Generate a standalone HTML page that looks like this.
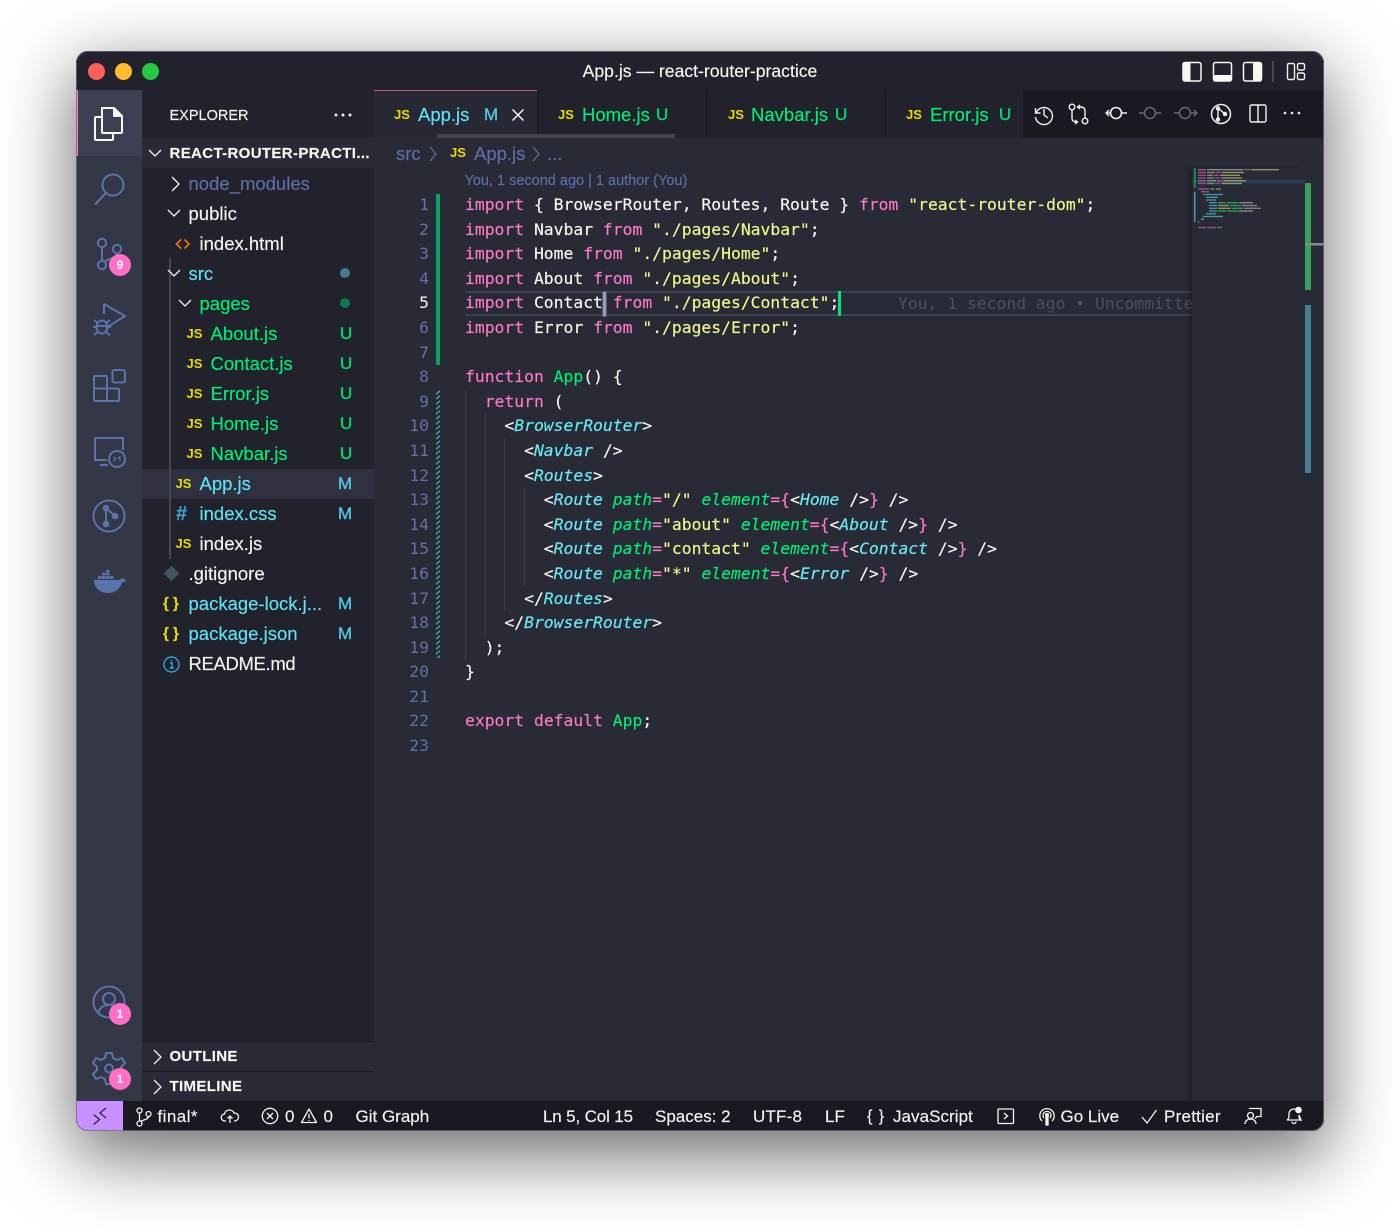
<!DOCTYPE html>
<html><head><meta charset="utf-8">
<style>
html,body{margin:0;padding:0;background:#fff;width:1400px;height:1232px;overflow:hidden}
#win{position:absolute;left:76px;top:51px;width:1248px;height:1080px;border-radius:12px;background:#282a36;overflow:hidden;box-shadow:0 22px 70px 4px rgba(0,0,0,.56)}
#ring{position:absolute;left:0;top:0;width:1248px;height:1080px;box-sizing:border-box;border-radius:12px;border:1px solid rgba(110,110,115,.75)}
.a{position:absolute}
.t{position:absolute;white-space:pre;font-family:"Liberation Sans",sans-serif;font-size:18.5px;line-height:30px;height:30px;color:#f8f8f2;margin-top:1px;-webkit-text-stroke:.15px currentColor}
.js{position:absolute;font:bold 13px/30px "Liberation Sans",sans-serif;color:#e8dc00;height:30px;white-space:pre;margin-top:1px}
.g{color:#00ee77}.c{color:#5fe4f5}.w{color:#f4f4f0}.b{color:#5e6fa8}
.gb{color:#00d96c;-webkit-text-stroke:.4px currentColor}.mb{color:#4fc3de;-webkit-text-stroke:.4px currentColor}
.code{position:absolute;left:389px;top:142px;font:16.37px/24.6px "DejaVu Sans Mono",monospace;color:#f8f8f2;white-space:pre;-webkit-text-stroke:.15px currentColor}
.code i{font-style:italic}
.k{color:#ff79c6}.s{color:#f1fa8c}.gn{color:#00ee77}.cy{color:#6ae9f5}
.ln{position:absolute;left:316px;width:37px;top:142px;text-align:right;font:16.37px/24.6px "DejaVu Sans Mono",monospace;color:#6272a4;white-space:pre}
svg{position:absolute;overflow:visible}
.i{fill:none;stroke:#5b73ad;stroke-width:2}
.s1{fill:none;stroke:#f4f4f0;stroke-width:1.3}
.st{position:absolute;top:1051px;white-space:pre;font:17px/30px "Liberation Sans",sans-serif;color:#f4f4f0;-webkit-text-stroke:.15px currentColor}
.badge{position:absolute;width:22px;height:22px;border-radius:11px;background:#ff6ec7;color:#fff;font:bold 12px/22px "Liberation Sans",sans-serif;text-align:center}
</style></head>
<body>
<div id="win">
<!-- title bar -->
<div class="a" style="left:0;top:0;width:1248px;height:39px;background:#21222c"></div>
<div class="a" style="left:12px;top:12px;width:17px;height:17px;border-radius:50%;background:#ff5f57"></div>
<div class="a" style="left:39px;top:12px;width:17px;height:17px;border-radius:50%;background:#febc2e"></div>
<div class="a" style="left:66px;top:12px;width:17px;height:17px;border-radius:50%;background:#28c840"></div>
<div class="t" style="left:0;width:1248px;text-align:center;top:4px;font-size:17.6px">App.js — react-router-practice</div>
<svg style="left:1106px;top:10px" width="150" height="20">
<rect x="1" y="1.500" width="18" height="18.500" rx="2" fill="none" stroke="#f8f8f2" stroke-width="1.500"/><rect x="1" y="1.500" width="7.500" height="18.500" fill="#f8f8f2"/>
<rect x="31.500" y="1.500" width="18" height="18.500" rx="2" fill="none" stroke="#f8f8f2" stroke-width="1.500"/><rect x="31.500" y="14" width="18" height="6" fill="#f8f8f2"/>
<rect x="61.500" y="1.500" width="18" height="18.500" rx="2" fill="none" stroke="#f8f8f2" stroke-width="1.500"/><rect x="71" y="1.500" width="8.500" height="18.500" fill="#f8f8f2"/>
<line x1="91" y1="0" x2="91" y2="21" stroke="#555" stroke-width="1.500"/>
<rect x="105.500" y="2.500" width="7" height="16" rx="1.500" fill="none" stroke="#f0f0ee" stroke-width="1.400"/><rect x="115.500" y="2.500" width="7" height="6.500" rx="1.500" fill="none" stroke="#f0f0ee" stroke-width="1.400"/><rect x="115.500" y="12" width="7" height="6.500" rx="1.500" fill="none" stroke="#f0f0ee" stroke-width="1.400"/>
</svg>

<!-- activity bar -->
<div class="a" style="left:0;top:39px;width:66px;height:1011px;background:#343746"></div>
<div class="a" style="left:0;top:39px;width:66px;height:66px;background:#3d3f52"></div>
<div class="a" style="left:0;top:39px;width:2px;height:66px;background:#ff79c6"></div>
<svg style="left:17px;top:55px" width="32" height="36" fill="none" stroke="#f8f8f2" stroke-width="2" stroke-linejoin="round">
<path d="M9 2h12l8 8v16a1 1 0 0 1-1 1H10a1 1 0 0 1-1-1z"/><path d="M21 2v8h8" fill="#f8f8f2"/><path d="M9 11H3a1 1 0 0 0-1 1v21a1 1 0 0 0 1 1h16a1 1 0 0 0 1-1v-6"/></svg>
<svg style="left:17px;top:120px" width="34" height="36" class="i"><circle cx="20" cy="14" r="10.500"/><path d="M13 22L2 33.500"/></svg>
<svg style="left:19px;top:186px" width="34" height="38" class="i"><circle cx="7" cy="6" r="4.200"/><circle cx="7" cy="28" r="4.200"/><circle cx="22" cy="12" r="4.200"/><path d="M7 10v14M22 16c0 5-8 5-13 9"/></svg>
<div class="badge" style="left:33px;top:203px">9</div>
<svg style="left:16px;top:251px" width="36" height="36" class="i"><path d="M12 2l21 12-19 12"/><path d="M12 2v10"/><ellipse cx="10" cy="25" rx="5.500" ry="6.500"/><path d="M5 24h10M2 18l4 3M18 18l-4 3M1 25h4M15 25h4M2 33l4-3M18 33l-4-3"/></svg>
<svg style="left:17px;top:318px" width="34" height="34" class="i" stroke-linejoin="round"><rect x="1" y="7" width="13" height="12.500" rx="1"/><rect x="1" y="19.500" width="13" height="12.500" rx="1"/><rect x="14" y="19.500" width="12" height="12.500" rx="1"/><rect x="19.500" y="1" width="12.500" height="12.500" rx="2"/></svg>
<svg style="left:17px;top:385px" width="36" height="34" class="i"><path d="M14 24H2V2h28v12"/><path d="M7 29h8"/><circle cx="24" cy="23" r="8"/><path d="M20.500 21l2 2-2 2M27.500 20l-2 2 2 2" stroke-width="1.400"/></svg>
<svg style="left:17px;top:448px" width="34" height="34" class="i"><circle cx="16" cy="17" r="15.500"/><circle cx="13" cy="9" r="2.300" fill="#5b73ad"/><circle cx="13" cy="25" r="2.300" fill="#5b73ad"/><circle cx="22" cy="17" r="2.300" fill="#5b73ad"/><path d="M13 9v16M13 9l9 8"/></svg>
<svg style="left:17px;top:519px" width="34" height="26"><path d="M1 10h26c1-2 3-2 4-1 1 .5 2 1 2 1.500-1 1.500-3 2-4 2-2 7-8 10.500-14 10.500C7 23 1 18 1 10z" fill="#5b73ad"/><g fill="#5b73ad"><rect x="5" y="6" width="3.500" height="3"/><rect x="9" y="6" width="3.500" height="3"/><rect x="13" y="6" width="3.500" height="3"/><rect x="17" y="6" width="3.500" height="3"/><rect x="9" y="2.500" width="3.500" height="3"/><rect x="13" y="2.500" width="3.500" height="3"/><rect x="13" y="0" width="3.500" height="2"/></g></svg>
<svg style="left:17px;top:935px" width="34" height="34" class="i"><circle cx="16" cy="16" r="15.500"/><circle cx="16" cy="13" r="6"/><path d="M5 27c2-6 6-8 11-8s9 2 11 8"/></svg>
<div class="badge" style="left:33px;top:952px">1</div>
<svg style="left:17px;top:1001px" width="34" height="34" class="i"><path d="M13 1h6l1 5 4 2 5-2 3 5-4 4v3l4 4-3 5-5-2-4 2-1 5h-6l-1-5-4-2-5 2-3-5 4-4v-3L0 11l3-5 5 2 4-2z" stroke-linejoin="round"/><circle cx="16" cy="16.500" r="4"/></svg>
<div class="badge" style="left:33px;top:1017px">1</div>

<!-- sidebar -->
<div class="a" style="left:66px;top:39px;width:232px;height:1011px;background:#21222c"></div>
<div class="t" style="left:93.500px;top:49px;font-size:14.500px;">EXPLORER</div>
<svg style="left:258px;top:62px" width="20" height="4" fill="#f0f0ee"><circle cx="2" cy="2" r="1.500"/><circle cx="9" cy="2" r="1.500"/><circle cx="16" cy="2" r="1.500"/></svg>
<div class="a" style="left:66px;top:87px;width:232px;height:30px;background:#282a36"></div>
<div class="t" style="left:93.500px;top:87px;font-size:15px;font-weight:bold;letter-spacing:.36px">REACT-ROUTER-PRACTI...</div>
<svg style="left:72px;top:97px" width="14" height="10" class="s1"><path d="M1 2l6 6 6-6"/></svg>

<div class="a" style="left:66px;top:418px;width:232px;height:30px;background:#2f3140"></div>
<div class="a" style="left:93px;top:207px;width:2px;height:301px;background:#44475a"></div>

<svg style="left:94px;top:125px" width="10" height="16" class="s1"><path d="M2 1l7 7-7 7"/></svg>
<div class="t b" style="left:112.500px;top:117px">node_modules</div>
<svg style="left:91px;top:157px" width="14" height="10" class="s1"><path d="M1 2l6 6 6-6"/></svg>
<div class="t w" style="left:112.500px;top:147px">public</div>
<svg style="left:99px;top:187px" width="16" height="12" fill="none" stroke="#e8730c" stroke-width="1.700"><path d="M6 1.500L1.500 6 6 10.500M9.500 1.500L14 6l-4.500 4.500"/></svg>
<div class="t w" style="left:123.500px;top:177px">index.html</div>
<svg style="left:91px;top:217px" width="14" height="10" class="s1"><path d="M1 2l6 6 6-6"/></svg>
<div class="t c" style="left:112.500px;top:207px">src</div>
<div class="a" style="left:264px;top:217px;width:10px;height:10px;border-radius:50%;background:#47798c"></div>
<svg style="left:102px;top:247px" width="14" height="10" class="s1"><path d="M1 2l6 6 6-6"/></svg>
<div class="t g" style="left:123.500px;top:237px">pages</div>
<div class="a" style="left:264px;top:247px;width:10px;height:10px;border-radius:50%;background:#0a7a4c"></div>

<div class="js" style="left:110.500px;top:267px">JS</div><div class="t g" style="left:134.500px;top:267px">About.js</div><div class="t gb" style="left:264px;top:267px;font-size:17px">U</div>
<div class="js" style="left:110.500px;top:297px">JS</div><div class="t g" style="left:134.500px;top:297px">Contact.js</div><div class="t gb" style="left:264px;top:297px;font-size:17px">U</div>
<div class="js" style="left:110.500px;top:327px">JS</div><div class="t g" style="left:134.500px;top:327px">Error.js</div><div class="t gb" style="left:264px;top:327px;font-size:17px">U</div>
<div class="js" style="left:110.500px;top:357px">JS</div><div class="t g" style="left:134.500px;top:357px">Home.js</div><div class="t gb" style="left:264px;top:357px;font-size:17px">U</div>
<div class="js" style="left:110.500px;top:387px">JS</div><div class="t g" style="left:134.500px;top:387px">Navbar.js</div><div class="t gb" style="left:264px;top:387px;font-size:17px">U</div>
<div class="js" style="left:99.500px;top:417px">JS</div><div class="t c" style="left:123.500px;top:417px">App.js</div><div class="t mb" style="left:262px;top:417px;font-size:17px">M</div>
<div class="t" style="left:100px;top:447px;color:#3aa5cf;font-weight:bold;font-size:20px">#</div><div class="t c" style="left:123.500px;top:447px">index.css</div><div class="t mb" style="left:262px;top:447px;font-size:17px">M</div>
<div class="js" style="left:99.500px;top:477px">JS</div><div class="t w" style="left:123.500px;top:477px">index.js</div>
<svg style="left:88px;top:515px" width="15" height="15"><rect x="2" y="2" width="11" height="11" transform="rotate(45 7.500 7.500)" fill="#3f5560"/></svg>
<div class="t w" style="left:112.500px;top:507px">.gitignore</div>
<div class="t" style="left:87px;top:537px;color:#e8dc00;font-size:15px;font-weight:bold;">{ }</div><div class="t c" style="left:112.500px;top:537px">package-lock.j...</div><div class="t mb" style="left:262px;top:537px;font-size:17px">M</div>
<div class="t" style="left:87px;top:567px;color:#e8dc00;font-size:15px;font-weight:bold;">{ }</div><div class="t c" style="left:112.500px;top:567px">package.json</div><div class="t mb" style="left:262px;top:567px;font-size:17px">M</div>
<svg style="left:87px;top:605px" width="17" height="17" fill="none" stroke="#2fa4cf" stroke-width="1.400"><circle cx="8.500" cy="8.500" r="7.500"/><path d="M7 7h2v5M6.500 12h4.500M8.500 4v1.500" stroke-width="1.500"/></svg>
<div class="t w" style="left:112.500px;top:597px;letter-spacing:-.35px">README.md</div>

<div class="a" style="left:66px;top:990px;width:232px;height:30px;background:#282a36;border-top:1px solid #191a21;box-sizing:border-box"></div>
<div class="a" style="left:66px;top:1020px;width:232px;height:30px;background:#282a36;border-top:1px solid #191a21;box-sizing:border-box"></div>
<svg style="left:76px;top:998px" width="10" height="16" class="s1"><path d="M2 1l7 7-7 7"/></svg>
<svg style="left:76px;top:1028px" width="10" height="16" class="s1"><path d="M2 1l7 7-7 7"/></svg>
<div class="t" style="left:93.500px;top:990px;font-size:15px;font-weight:bold;letter-spacing:.35px">OUTLINE</div>
<div class="t" style="left:93.500px;top:1020px;font-size:15px;font-weight:bold;letter-spacing:.35px">TIMELINE</div>

<!-- tabs -->
<div class="a" style="left:298px;top:39px;width:725px;height:48px;background:#21222c"></div>
<div class="a" style="left:947px;top:39px;width:301px;height:48px;background:#191a21"></div>
<div class="a" style="left:298px;top:39px;width:163px;height:48px;background:#262834;border-top:1px solid #c2548f;box-sizing:border-box"></div>
<div class="a" style="left:630px;top:39px;width:1px;height:48px;background:#191a21"></div>
<div class="a" style="left:809px;top:39px;width:1px;height:48px;background:#191a21"></div>
<div class="a" style="left:461px;top:39px;width:1px;height:48px;background:#191a21"></div>
<div class="a" style="left:361px;top:83px;width:238px;height:4px;background:#44454c"></div>
<div class="js" style="left:318px;top:48px">JS</div><div class="t c" style="left:342px;top:48px">App.js</div><div class="t mb" style="left:408px;top:48px;font-size:17px">M</div>
<svg style="left:435px;top:57px" width="14" height="14" stroke="#f4f4f0" stroke-width="1.500"><path d="M1.500 1.500l11 11M12.500 1.500l-11 11"/></svg>
<div class="js" style="left:482px;top:48px">JS</div><div class="t g" style="left:506px;top:48px">Home.js</div><div class="t gb" style="left:580px;top:48px;font-size:17px">U</div>
<div class="js" style="left:652px;top:48px">JS</div><div class="t g" style="left:675px;top:48px">Navbar.js</div><div class="t gb" style="left:759px;top:48px;font-size:17px">U</div>
<div class="js" style="left:830px;top:48px">JS</div><div class="t g" style="left:854px;top:48px">Error.js</div><div class="t gb" style="left:923px;top:48px;font-size:17px">U</div>

<svg style="left:957px;top:52px" width="270" height="24" fill="none" stroke="#f0f0ee" stroke-width="1.400">
<path d="M2.500 5v5h5M3 10a8.500 8.500 0 1 1-.5 4"/><path d="M11 6v6l4 3"/>
<circle cx="39" cy="4" r="2.800"/><circle cx="52" cy="18" r="2.800"/><path d="M39 7v8c0 3 2 4 4 4h2M52 15V8c0-3-2-4-4-4h-3M47 2l-2.500 2 2.500 2M42 17l2.500 2-2.500 2"/>
<circle cx="83" cy="10" r="5.500" stroke-width="1.600"/><path d="M88 10h6M78 10h-5M76 7l-3 3 3 3"/>
<g stroke="#6a6b70"><circle cx="117" cy="10" r="5.500"/><path d="M106 10h5.500M122.500 10h5.500"/>
<circle cx="152" cy="10" r="5.500"/><path d="M141 10h5.500M157.500 10h6M161 7l3 3-3 3"/></g>
<circle cx="188" cy="11" r="9.500" stroke-width="1.500"/><path d="M185 5v12M185 5l7 6"/><circle cx="185" cy="5.500" r="1.500" fill="#f0f0ee"/><circle cx="185" cy="16.500" r="1.500" fill="#f0f0ee"/><circle cx="192" cy="11" r="1.500" fill="#f0f0ee"/>
<rect x="217" y="2" width="16" height="17" rx="1.500"/><path d="M225 2v17"/>
<g fill="#f0f0ee" stroke="none"><circle cx="252" cy="10" r="1.300"/><circle cx="259" cy="10" r="1.300"/><circle cx="266" cy="10" r="1.300"/></g>
</svg>

<!-- breadcrumb -->
<div class="t b" style="left:320px;top:87px;">src</div>
<svg style="left:352px;top:95px" width="10" height="16" fill="none" stroke="#5e6fa8" stroke-width="1.200"><path d="M2 1l6 7-6 7"/></svg>
<div class="js" style="left:374px;top:86px">JS</div>
<div class="t b" style="left:398px;top:87px;">App.js</div>
<svg style="left:455px;top:95px" width="10" height="16" fill="none" stroke="#5e6fa8" stroke-width="1.200"><path d="M2 1l6 7-6 7"/></svg>
<div class="t b" style="left:471px;top:87px;">...</div>
<div class="t" style="left:388.500px;top:114px;font-size:14.500px;color:#5e6fa8">You, 1 second ago | 1 author (You)</div>

<!-- gutter -->
<div class="a" style="left:360px;top:143px;width:4px;height:171px;background:#0aa35e"></div>
<svg style="left:360px;top:339px" width="5" height="268"><defs><pattern id="h" width="4" height="5" patternUnits="userSpaceOnUse"><path d="M-.5 4.500L4.500 .5" stroke="#3f9cb4" stroke-width="1.500"/></pattern></defs><rect width="4" height="268" fill="url(#h)"/></svg>

<!-- current line -->
<div class="a" style="left:389px;top:240px;width:727px;height:24.600px;box-sizing:border-box;border-top:2px solid #3e4152;border-bottom:2px solid #3e4152"></div>

<!-- indent guides -->
<div class="a" style="left:389px;top:339px;width:1px;height:270px;background:#3b3d4c"></div>
<div class="a" style="left:408.500px;top:363px;width:1px;height:221px;background:#3b3d4c"></div>
<div class="a" style="left:428px;top:388px;width:1px;height:172px;background:#3b3d4c"></div>
<div class="a" style="left:448px;top:437px;width:1px;height:98px;background:#3b3d4c"></div>

<div class="ln">1
2
3
4
<span style="color:#f8f8f2">5</span>
6
7
8
9
10
11
12
13
14
15
16
17
18
19
20
21
22
23</div>
<div class="code"><span class="k">import</span> { BrowserRouter, Routes, Route } <span class="k">from</span> <span class="s">"react-router-dom"</span>;
<span class="k">import</span> Navbar <span class="k">from</span> <span class="s">"./pages/Navbar"</span>;
<span class="k">import</span> Home <span class="k">from</span> <span class="s">"./pages/Home"</span>;
<span class="k">import</span> About <span class="k">from</span> <span class="s">"./pages/About"</span>;
<span class="k">import</span> Contact <span class="k">from</span> <span class="s">"./pages/Contact"</span>;
<span class="k">import</span> Error <span class="k">from</span> <span class="s">"./pages/Error"</span>;

<span class="k">function</span> <span class="gn">App</span>() {
  <span class="k">return</span> (
    &lt;<i class="cy">BrowserRouter</i>&gt;
      &lt;<i class="cy">Navbar</i> /&gt;
      &lt;<i class="cy">Routes</i>&gt;
        &lt;<i class="cy">Route</i> <i class="gn">path</i><span class="k">=</span><span class="s">"/"</span> <i class="gn">element</i><span class="k">={</span>&lt;<i class="cy">Home</i> /&gt;<span class="k">}</span> /&gt;
        &lt;<i class="cy">Route</i> <i class="gn">path</i><span class="k">=</span><span class="s">"about"</span> <i class="gn">element</i><span class="k">={</span>&lt;<i class="cy">About</i> /&gt;<span class="k">}</span> /&gt;
        &lt;<i class="cy">Route</i> <i class="gn">path</i><span class="k">=</span><span class="s">"contact"</span> <i class="gn">element</i><span class="k">={</span>&lt;<i class="cy">Contact</i> /&gt;<span class="k">}</span> /&gt;
        &lt;<i class="cy">Route</i> <i class="gn">path</i><span class="k">=</span><span class="s">"*"</span> <i class="gn">element</i><span class="k">={</span>&lt;<i class="cy">Error</i> /&gt;<span class="k">}</span> /&gt;
      &lt;/<i class="cy">Routes</i>&gt;
    &lt;/<i class="cy">BrowserRouter</i>&gt;
  );
}

<span class="k">export</span> <span class="k">default</span> <span class="gn">App</span>;</div>

<div class="a" style="left:527px;top:241px;width:3px;height:24px;background:#9a9ca6;box-shadow:0 0 0 1px #4a5a88"></div>
<div class="a" style="left:762px;top:240px;width:3px;height:25px;background:#00e676"></div>
<div class="a" style="left:822px;top:241px;width:294px;height:24.600px;overflow:hidden;white-space:pre;font:16.370px/24.600px 'DejaVu Sans Mono',monospace;color:#4d4f5e">You, 1 second ago • Uncommitted changes</div>

<!-- minimap -->
<div class="a" style="left:1116px;top:117px;width:113px;height:933px;background:#282a36;box-shadow:-3px 0 4px rgba(0,0,0,.28)"></div>
<svg style="left:1116px;top:117px" width="132" height="933">
<rect x="0" y="12" width="113" height="3" fill="#27405a"/>
<rect x="2" y="0" width="1.500" height="20" fill="#0aa35e"/>
<rect x="2" y="24" width="1.500" height="30" fill="#3f9cb4"/>
<g opacity=".72">
<rect x="6" y="1" width="8" height="1.400" fill="#c2609e"/><rect x="15" y="1" width="36" height="1.400" fill="#a8a8a0"/><rect x="52" y="1" width="6" height="1.400" fill="#c2609e"/><rect x="59" y="1" width="28" height="1.400" fill="#b8bd78"/>
<rect x="6" y="3.800" width="8" height="1.400" fill="#c2609e"/><rect x="15" y="3.800" width="8" height="1.400" fill="#a8a8a0"/><rect x="24" y="3.800" width="5" height="1.400" fill="#c2609e"/><rect x="30" y="3.800" width="22" height="1.400" fill="#b8bd78"/>
<rect x="6" y="6.600" width="8" height="1.400" fill="#c2609e"/><rect x="15" y="6.600" width="6" height="1.400" fill="#a8a8a0"/><rect x="22" y="6.600" width="5" height="1.400" fill="#c2609e"/><rect x="28" y="6.600" width="20" height="1.400" fill="#b8bd78"/>
<rect x="6" y="9.300" width="8" height="1.400" fill="#c2609e"/><rect x="15" y="9.300" width="7" height="1.400" fill="#a8a8a0"/><rect x="23" y="9.300" width="5" height="1.400" fill="#c2609e"/><rect x="29" y="9.300" width="21" height="1.400" fill="#b8bd78"/>
<rect x="6" y="12" width="8" height="1.400" fill="#c2609e"/><rect x="15" y="12" width="9" height="1.400" fill="#a8a8a0"/><rect x="25" y="12" width="5" height="1.400" fill="#c2609e"/><rect x="31" y="12" width="23" height="1.400" fill="#b8bd78"/>
<rect x="6" y="14.800" width="8" height="1.400" fill="#c2609e"/><rect x="15" y="14.800" width="7" height="1.400" fill="#a8a8a0"/><rect x="23" y="14.800" width="5" height="1.400" fill="#c2609e"/><rect x="29" y="14.800" width="21" height="1.400" fill="#b8bd78"/>
<rect x="6" y="20.300" width="11" height="1.400" fill="#c2609e"/><rect x="18" y="20.300" width="5" height="1.400" fill="#36c56c"/><rect x="24" y="20.300" width="5" height="1.400" fill="#a8a8a0"/>
<rect x="9" y="23" width="8" height="1.400" fill="#c2609e"/>
<rect x="11" y="25.800" width="20" height="1.400" fill="#55bccb"/>
<rect x="14" y="28.600" width="12" height="1.400" fill="#55bccb"/>
<rect x="14" y="31.300" width="10" height="1.400" fill="#55bccb"/>
<rect x="17" y="34" width="8" height="1.400" fill="#55bccb"/><rect x="26" y="34" width="8" height="1.400" fill="#36c56c"/><rect x="35" y="34" width="11" height="1.400" fill="#36c56c"/><rect x="47" y="34" width="14" height="1.400" fill="#a8a8a0"/>
<rect x="17" y="36.800" width="8" height="1.400" fill="#55bccb"/><rect x="26" y="36.800" width="11" height="1.400" fill="#b8bd78"/><rect x="38" y="36.800" width="11" height="1.400" fill="#36c56c"/><rect x="50" y="36.800" width="15" height="1.400" fill="#a8a8a0"/>
<rect x="17" y="39.600" width="8" height="1.400" fill="#55bccb"/><rect x="26" y="39.600" width="13" height="1.400" fill="#b8bd78"/><rect x="40" y="39.600" width="11" height="1.400" fill="#36c56c"/><rect x="52" y="39.600" width="17" height="1.400" fill="#a8a8a0"/>
<rect x="17" y="42.300" width="8" height="1.400" fill="#55bccb"/><rect x="26" y="42.300" width="8" height="1.400" fill="#36c56c"/><rect x="35" y="42.300" width="11" height="1.400" fill="#36c56c"/><rect x="47" y="42.300" width="14" height="1.400" fill="#a8a8a0"/>
<rect x="14" y="45" width="10" height="1.400" fill="#55bccb"/>
<rect x="11" y="47.800" width="20" height="1.400" fill="#55bccb"/>
<rect x="9" y="50.600" width="3" height="1.400" fill="#a8a8a0"/>
<rect x="6" y="53.300" width="1.500" height="1.400" fill="#a8a8a0"/>
<rect x="6" y="58.800" width="8" height="1.400" fill="#c2609e"/><rect x="15" y="58.800" width="9" height="1.400" fill="#c2609e"/><rect x="25" y="58.800" width="5" height="1.400" fill="#36c56c"/>
</g>
<rect x="113" y="0" width="19" height="933" fill="#282a36"/>
<rect x="113" y="15" width="6" height="107" fill="#359e5e"/>
<rect x="113" y="137" width="6" height="168" fill="#447f94"/>
<rect x="113" y="75" width="19" height="2.500" fill="#8a8a8a"/>
</svg>

<!-- status bar -->
<div class="a" style="left:0;top:1050px;width:1248px;height:30px;background:#191a21"></div>
<div class="a" style="left:0;top:1050px;width:47px;height:30px;background:#c792ff"></div>
<svg style="left:16px;top:1056px" width="16" height="18" fill="none" stroke="#282a36" stroke-width="1.300"><path d="M1.500 7.500l6 5-6 5M14 1l-6 5 6 5"/></svg>
<svg style="left:59px;top:1056px" width="18" height="20" class="s1"><circle cx="4.500" cy="3.500" r="2.500"/><circle cx="4.500" cy="16.500" r="2.500"/><circle cx="13.500" cy="7" r="2.500"/><path d="M4.500 6v8M13.500 9.500c0 3-5 3-8 5"/></svg>
<div class="st" style="left:81.500px;letter-spacing:.45px">final*</div>
<svg style="left:145px;top:1058px" width="18" height="15" class="s1"><path d="M5 12H4a3.500 3.500 0 0 1-.5-7A5 5 0 0 1 13 4a3.800 3.800 0 0 1 1 8h-1"/><path d="M9 14V7M6.500 9.500L9 7l2.500 2.500"/></svg>
<svg style="left:185px;top:1056px" width="18" height="18" class="s1"><circle cx="9" cy="9" r="7.700"/><path d="M6 6l6 6M12 6l-6 6"/></svg>
<div class="st" style="left:209px">0</div>
<svg style="left:224px;top:1056px" width="18" height="18" class="s1"><path d="M9 2l7.500 13.500h-15z" stroke-linejoin="round"/><path d="M9 7v4.500M9 13v1"/></svg>
<div class="st" style="left:247.500px">0</div>
<div class="st" style="left:279.500px">Git Graph</div>
<div class="st" style="left:467px;letter-spacing:-.15px">Ln 5, Col 15</div>
<div class="st" style="left:579px">Spaces: 2</div>
<div class="st" style="left:677px;letter-spacing:.2px">UTF-8</div>
<div class="st" style="left:749px">LF</div>
<div class="st" style="left:791px;letter-spacing:1px;font-size:16px">{ }</div>
<div class="st" style="left:817px;letter-spacing:.05px">JavaScript</div>
<svg style="left:921px;top:1057px" width="18" height="16" class="s1"><rect x="1" y="1" width="15.500" height="14.500" rx="1"/><path d="M7 5l3.500 3-3.500 3"/></svg>
<svg style="left:962px;top:1056px" width="18" height="20" class="s1"><path d="M4 14a7.200 7.200 0 1 1 10 0"/><path d="M6 11a4 4 0 1 1 6 0"/><circle cx="9" cy="8" r="1.400" fill="#f4f4f0"/><rect x="8" y="10" width="2" height="8" fill="#f4f4f0"/></svg>
<div class="st" style="left:984.500px">Go Live</div>
<svg style="left:1065px;top:1058px" width="17" height="15" class="s1"><path d="M1 8l5 6L15.500 1"/></svg>
<div class="st" style="left:1088px;letter-spacing:.25px">Prettier</div>
<svg style="left:1168px;top:1056px" width="18" height="18" class="s1"><path d="M5 1.500h12v8h-4l-2 2"/><circle cx="6.500" cy="8.500" r="3"/><path d="M1 17c0-3 2.500-5 5.500-5s5.500 2 5.500 5"/></svg>
<svg style="left:1209px;top:1055px" width="18" height="18" class="s1"><path d="M2 14c2-1 2-3 2-6s2-5 5-5c1 0 2 .3 3 1M14 9c0 3 0 4 2 5zM2 14h14M7 15.500a2 2 0 0 0 4 0"/><circle cx="13.500" cy="4" r="3.300" fill="#f8f8f2" stroke="none"/></svg>
<div id="ring"></div>
</div>
</body></html>
